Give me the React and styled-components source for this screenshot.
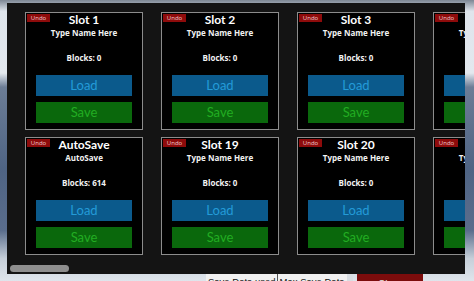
import React from 'react';
import styled, { createGlobalStyle } from 'styled-components';

const GlobalStyle = createGlobalStyle`
  html, body {
    margin: 0;
    padding: 0;
    overflow: hidden;
  }
  body {
    width: 474px;
    height: 281px;
    background: linear-gradient(
      180deg,
      #7d8794 0%,
      #dfe5ec 4%,
      #e3e8ee 26%,
      #6c7d96 31%,
      #4f6484 60%,
      #5a6d8c 82%,
      #c6cfd9 92%,
      #dfe5ec 100%
    );
    font-family: 'Lato', 'Liberation Sans', sans-serif;
  }
`;

const slots = [
  { title: 'Slot 1', name: 'Type Name Here', blocks: 0 },
  { title: 'Slot 2', name: 'Type Name Here', blocks: 0 },
  { title: 'Slot 3', name: 'Type Name Here', blocks: 0 },
  { title: 'Slot 4', name: 'Type Name Here', blocks: 0 },
  { title: 'AutoSave', name: 'AutoSave', blocks: 614 },
  { title: 'Slot 19', name: 'Type Name Here', blocks: 0 },
  { title: 'Slot 20', name: 'Type Name Here', blocks: 0 },
  { title: 'Slot 21', name: 'Type Name Here', blocks: 0 },
];

const SlotCard = ({ slot }) => (
  <Card>
    <UndoBadge>Undo</UndoBadge>
    <Title>{slot.title}</Title>
    <SlotName>{slot.name}</SlotName>
    <Blocks>Blocks: {slot.blocks}</Blocks>
    <ActionButton $kind='load'>Load</ActionButton>
    <ActionButton $kind='save'>Save</ActionButton>
  </Card>
);

const App = () => {
  return (
    <>
      <GlobalStyle />
      <Screen>
        <Panel>
          <SlotGrid>
            {slots.map((slot) => (
              <SlotCard key={slot.title} slot={slot} />
            ))}
          </SlotGrid>
          <ScrollThumb />
        </Panel>
        <StatusBar>
          <UsageBox>
            <UsageLabel>Save Data used</UsageLabel>
            <UsageLabel>Max Save Data</UsageLabel>
          </UsageBox>
          <Spacer />
          <RedBox>Clear</RedBox>
        </StatusBar>
      </Screen>
    </>
  );
};

export default App;

const Screen = styled.div`
  width: 474px;
  height: 281px;
  display: flex;
  flex-direction: column;
  padding-top: 3px;
  box-sizing: border-box;
  overflow: hidden;
`;

const Panel = styled.div`
  width: 458px;
  height: 271px;
  margin-left: 7px;
  background: #141414;
  display: flex;
  flex-direction: column;
  overflow: hidden;
  flex-shrink: 0;
`;

const SlotGrid = styled.div`
  display: grid;
  grid-template-columns: repeat(4, 118px);
  grid-auto-rows: 118px;
  column-gap: 18px;
  row-gap: 7px;
  padding: 9px 0 0 18px;
`;

const Card = styled.div`
  position: relative;
  box-sizing: border-box;
  background: #000;
  border: 1px solid #8c8c8c;
  display: flex;
  flex-direction: column;
  align-items: center;
`;

const UndoBadge = styled.span`
  position: absolute;
  top: 1px;
  left: 1px;
  width: 23px;
  height: 8px;
  background: #8e0b0b;
  color: #efcaca;
  font-family: 'Open Sans', 'Liberation Sans', sans-serif;
  font-size: 6px;
  line-height: 8px;
  text-align: center;
`;

const Title = styled.div`
  color: #fff;
  font-weight: 700;
  font-size: 12px;
  line-height: 13px;
`;

const SlotName = styled.div`
  margin-top: 2px;
  color: #f2f2f2;
  font-family: 'Open Sans', 'Liberation Sans', sans-serif;
  font-weight: 700;
  font-size: 8px;
  line-height: 10px;
`;

const Blocks = styled(SlotName)`
  margin-top: 15px;
`;

const ActionButton = styled.div`
  width: 96px;
  height: 21px;
  margin-top: ${({ $kind }) => ($kind === 'load' ? '12px' : '6px')};
  background: ${({ $kind }) => ($kind === 'load' ? '#0b5a8c' : '#0a680c')};
  color: ${({ $kind }) => ($kind === 'load' ? '#239bd8' : '#22ad22')};
  font-size: 13px;
  line-height: 21px;
  text-align: center;
`;

const ScrollThumb = styled.div`
  width: 59px;
  height: 7px;
  margin: 10px 0 0 3px;
  background: #8e8e8e;
  border-radius: 4px;
`;

const StatusBar = styled.div`
  display: flex;
  align-items: flex-start;
  height: 7px;
  padding-left: 206px;
  overflow: hidden;
`;

const UsageBox = styled.div`
  width: 141px;
  height: 16px;
  display: flex;
  background: #f1f1f1;
  overflow: hidden;
`;

const UsageLabel = styled.span`
  padding: 0 1px 0 2px;
  color: #111;
  font-family: 'Liberation Sans', sans-serif;
  font-size: 9.5px;
  line-height: 16px;
  white-space: nowrap;
  & + & {
    border-left: 1px solid #555;
  }
`;

const Spacer = styled.div`
  width: 6px;
  height: 16px;
  background: #d9dee3;
`;

const RedBox = styled.div`
  width: 66px;
  height: 20px;
  margin-left: 4px;
  background: #7c0c0c;
  color: #e6e6e6;
  font-family: 'Liberation Sans', sans-serif;
  font-size: 10px;
  line-height: 21px;
  text-align: center;
`;
